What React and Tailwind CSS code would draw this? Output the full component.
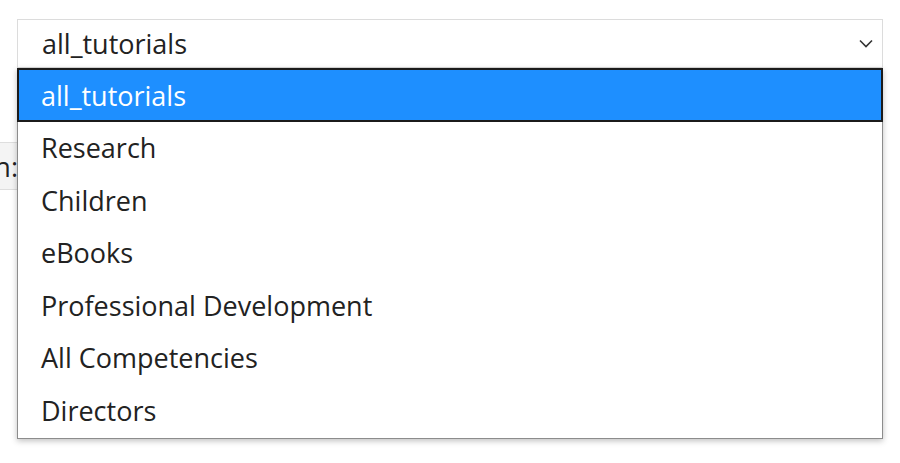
import React from "react";

const options = [
  "all_tutorials",
  "Research",
  "Children",
  "eBooks",
  "Professional Development",
  "All Competencies",
  "Directors",
];

const App = () => {
  return (
    <main
      className="relative bg-white w-[900px] h-[463px] overflow-hidden text-[#222]"
      style={{ fontFamily: '"Open Sans", "Noto Sans", sans-serif' }}
    >
      {/* Select */}
      <div className="pt-[19px] pl-[17px] pr-[17px]">
        <div className="h-[49px] border border-[#dcdcdc] bg-white flex items-center justify-between pl-[24px] pr-[8px]">
          <span className="text-[27px] leading-none">all_tutorials</span>
          <svg width="14" height="9" viewBox="0 0 14 9" className="mr-[1px]">
            <path d="M1 1.5 L7 7.5 L13 1.5" fill="none" stroke="#333" strokeWidth="1.6" />
          </svg>
        </div>
      </div>

      {/* Content behind the dropdown */}
      <div className="mt-[74px] flex">
        <div className="-ml-[100px] h-[48px] w-[260px] bg-[#f4f4f4] border border-[#dedede] flex items-center">
          <div className="w-[117px] flex justify-end">
            <span className="text-[27px] leading-none whitespace-nowrap">Domain:</span>
          </div>
        </div>
      </div>

      {/* Dropdown list */}
      <ul className="absolute left-[17px] top-[68px] w-[866px] h-[371px] bg-white border border-[#8c8c8c] shadow-[0_2px_6px_rgba(0,0,0,0.25)]">
        {options.map((opt, i) => (
          <li
            key={opt}
            className={
              i === 0
                ? "h-[54px] flex items-center pl-[22px] pt-[2px] bg-[#1e8fff] text-white border-2 border-[#1b1b1b] -m-px text-[27px]"
                : "h-[52.6px] flex items-center pl-[23px] pt-[2px] text-[27px]"
            }
          >
            {opt}
          </li>
        ))}
      </ul>
    </main>
  );
};

export default App;
